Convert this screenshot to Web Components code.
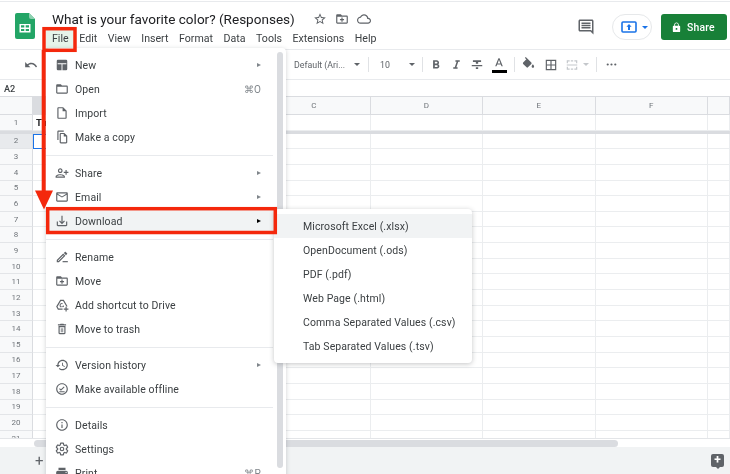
<!DOCTYPE html>
<html>
<head>
<meta charset="utf-8">
<title>What is your favorite color? (Responses)</title>
<style>
  html, body { margin: 0; padding: 0; background: #fff; }
  body { width: 730px; height: 474px; overflow: hidden; position: relative; font-family: Roboto, "Liberation Sans", sans-serif; filter: blur(0.4px); }
</style>
</head>
<body>
<sheet-header></sheet-header>
<sheet-toolbar></sheet-toolbar>
<formula-bar></formula-bar>
<sheet-grid></sheet-grid>
<sheet-footer></sheet-footer>

<file-menu>
  <menu-row icon="new" arrow>New</menu-row>
  <menu-row icon="open" shortcut="⌘O">Open</menu-row>
  <menu-row icon="file">Import</menu-row>
  <menu-row icon="copy">Make a copy</menu-row>
  <menu-sep></menu-sep>
  <menu-row icon="share" arrow>Share</menu-row>
  <menu-row icon="mail" arrow>Email</menu-row>
  <menu-row icon="download" arrow active>Download</menu-row>
  <menu-sep></menu-sep>
  <menu-row icon="rename">Rename</menu-row>
  <menu-row icon="move">Move</menu-row>
  <menu-row icon="shortcut">Add shortcut to Drive</menu-row>
  <menu-row icon="trash">Move to trash</menu-row>
  <menu-sep></menu-sep>
  <menu-row icon="history" arrow>Version history</menu-row>
  <menu-row icon="offline">Make available offline</menu-row>
  <menu-sep></menu-sep>
  <menu-row icon="info">Details</menu-row>
  <menu-row icon="settings">Settings</menu-row>
  <menu-row icon="print" shortcut="⌘P">Print</menu-row>
</file-menu>

<export-menu>
  <export-row active>Microsoft Excel (.xlsx)</export-row>
  <export-row>OpenDocument (.ods)</export-row>
  <export-row>PDF (.pdf)</export-row>
  <export-row>Web Page (.html)</export-row>
  <export-row>Comma Separated Values (.csv)</export-row>
  <export-row>Tab Separated Values (.tsv)</export-row>
</export-menu>

<red-callouts></red-callouts>

<script>
const ICONS = {
  star: '<path d="M22 9.24l-7.19-.62L12 2 9.19 8.63 2 9.24l5.46 4.73L5.82 21 12 17.27 18.18 21l-1.63-7.03L22 9.24zM12 15.4l-3.76 2.27 1-4.28-3.32-2.88 4.38-.38L12 6.1l1.71 4.04 4.38.38-3.32 2.88 1 4.28L12 15.4z"/>',
  move: '<path d="M20 6h-8l-2-2H4c-1.1 0-1.99.9-1.99 2L2 18c0 1.1.9 2 2 2h16c1.1 0 2-.9 2-2V8c0-1.1-.9-2-2-2zm0 12H4V8h16v10z"/><path d="M11 9.5h2V12h2.5v2H13v2.5h-2V14H8.5v-2H11z"/>',
  cloud: '<path d="M19.35 10.04C18.67 6.59 15.64 4 12 4 9.11 4 6.6 5.64 5.35 8.04 2.34 8.36 0 10.91 0 14c0 3.31 2.69 6 6 6h13c2.76 0 5-2.24 5-5 0-2.64-2.05-4.78-4.65-4.96zM19 18H6c-2.21 0-4-1.79-4-4s1.79-4 4-4h.71C7.37 7.69 9.48 6 12 6c3.04 0 5.5 2.46 5.5 5.5v.5H19c1.66 0 3 1.34 3 3s-1.34 3-3 3z"/>',
  comment: '<path d="M21.99 4c0-1.1-.89-2-1.99-2H4c-1.1 0-2 .9-2 2v12c0 1.1.9 2 2 2h14l4 4-.01-18zM20 4v13.17L18.83 16H4V4h16zM6 12h12v2H6zm0-3h12v2H6zm0-3h12v2H6z"/>',
  lock: '<path d="M18 8h-1V6c0-2.76-2.24-5-5-5S7 3.24 7 6v2H6c-1.1 0-2 .9-2 2v10c0 1.1.9 2 2 2h12c1.1 0 2-.9 2-2V10c0-1.1-.9-2-2-2zm-6 9c-1.1 0-2-.9-2-2s.9-2 2-2 2 .9 2 2-.9 2-2 2zm3.1-9H8.9V6c0-1.71 1.39-3.1 3.1-3.1 1.71 0 3.1 1.39 3.1 3.1v2z"/>',
  undo: '<path d="M12.5 8c-2.65 0-5.05.99-6.9 2.6L2 7v9h9l-3.62-3.62c1.39-1.16 3.16-1.88 5.12-1.88 3.54 0 6.55 2.31 7.6 5.5l2.37-.78C21.08 11.03 17.15 8 12.5 8z"/>',
  bold: '<path d="M15.6 10.79c.97-.67 1.65-1.77 1.65-2.79 0-2.26-1.75-4-4-4H7v14h7.04c2.09 0 3.71-1.7 3.71-3.79 0-1.52-.86-2.82-2.15-3.42zM10 6.5h3c.83 0 1.5.67 1.5 1.5s-.67 1.5-1.5 1.5h-3v-3zm3.5 9H10v-3h3.5c.83 0 1.5.67 1.5 1.5s-.67 1.5-1.5 1.5z"/>',
  italic: '<path d="M10 4v3h2.21l-3.42 10H6v3h8v-3h-2.21l3.42-10H18V4z"/>',
  strike: '<path d="M10 19h4v-3h-4v3zM5 4v3h5v3h4V7h5V4H5zM3 14h18v-2H3v2z"/>',
  textcolor: '<path d="M11 2L5.5 16h2.25l1.12-3h6.25l1.12 3h2.25L13 2h-2zm-1.38 9L12 4.67 14.38 11H9.62z"/>',
  fill: '<path d="M16.56 8.94L7.62 0 6.21 1.41l2.38 2.38-5.15 5.15c-.59.59-.59 1.54 0 2.12l5.5 5.5c.29.29.68.44 1.06.44s.77-.15 1.06-.44l5.5-5.5c.59-.58.59-1.53 0-2.12zM19 11.5s-2 2.17-2 3.5c0 1.1.9 2 2 2s2-.9 2-2c0-1.33-2-3.5-2-3.5z"/>',
  borders: '<path d="M3 3v18h18V3H3zm8 16H5v-6h6v6zm0-8H5V5h6v6zm8 8h-6v-6h6v6zm0-8h-6V5h6v6z"/>',
  merge: '<path d="M3 4h5v2H5v3H3zM10 4h4v2h-4zM16 4h5v5h-2V6h-3zM3 11h18v2H3zM3 15h2v3h3v2H3zM10 18h4v2h-4zM19 15h2v5h-5v-2h3z"/>',
  more: '<circle cx="5" cy="12" r="2"/><circle cx="12" cy="12" r="2"/><circle cx="19" cy="12" r="2"/>',
  new: '<path d="M5 3h14a2 2 0 0 1 2 2v14a2 2 0 0 1-2 2H5a2 2 0 0 1-2-2V5a2 2 0 0 1 2-2zm-.5 6v1.6h6.7V21h1.6V10.6h6.7V9z" fill-rule="evenodd"/>',
  open: '<path d="M20 6h-8l-2-2H4c-1.1 0-1.99.9-1.99 2L2 18c0 1.1.9 2 2 2h16c1.1 0 2-.9 2-2V8c0-1.1-.9-2-2-2zm0 12H4V8h16v10z"/>',
  file: '<path d="M14 2H6c-1.1 0-1.99.9-1.99 2L4 20c0 1.1.89 2 1.99 2H18c1.1 0 2-.9 2-2V8l-6-6zm4 18H6V4h7v5h5v11z"/>',
  copy: '<path d="M15 1H6c-1.1 0-2 .9-2 2v14h2V3h9V1zm1 4H10c-1.1 0-2 .9-2 2v14c0 1.1.9 2 2 2h9c1.1 0 2-.9 2-2V10l-5-5zm3 16h-9V7h5v4h4v10z"/>',
  share: '<path d="M15 12c2.21 0 4-1.79 4-4s-1.79-4-4-4-4 1.79-4 4 1.79 4 4 4zm0-6c1.1 0 2 .9 2 2s-.9 2-2 2-2-.9-2-2 .9-2 2-2zm0 8c-2.67 0-8 1.34-8 4v2h16v-2c0-2.66-5.33-4-8-4zm-6 4c.22-.72 3.31-2 6-2 2.7 0 5.8 1.29 6 2H9zm-3-3v-3h3v-2H6V7H4v3H1v2h3v3h2z" transform="matrix(-1 0 0 1 24 0)"/>',
  mail: '<path d="M22 6c0-1.1-.9-2-2-2H4c-1.1 0-2 .9-2 2v12c0 1.1.9 2 2 2h16c1.1 0 2-.9 2-2V6zm-2 0l-8 5-8-5h16zm0 12H4V8l8 5 8-5v10z"/>',
  download: '<path d="M19 13v6H5v-6H3v6c0 1.1.9 2 2 2h14c1.1 0 2-.9 2-2v-6h-2zm-6 .67l2.59-2.58L17 12.5l-5 5-5-5 1.41-1.41L11 13.67V3h2z"/>',
  rename: '<path d="M14.06 9.02l.92.92L5.92 19H5v-.92l9.06-9.06M17.66 3c-.25 0-.51.1-.7.29l-1.83 1.83 3.75 3.75 1.83-1.83c.39-.39.39-1.02 0-1.41l-2.34-2.34c-.2-.2-.45-.29-.71-.29zm-3.6 3.19L3 17.25V21h3.75L17.81 9.94l-3.75-3.75z"/><path d="M13 19h9v2h-9z"/>',
  shortcut: '<path d="M9 3h6l6.5 11-1.7 1.2L13.9 5H10.1L4.3 15l1.9 3.2H13V20H5l-3-5.3z"/><path d="M9.5 9.2a4 4 0 0 1 4-.2l-1 1.6a2 2 0 1 0 1.2 2.2l-1.7.6 2.6-1 1 3.2-7 .2a5 5 0 0 1 1-6.6z" opacity=".9"/><path d="M18 15h2v3h3v2h-3v3h-2v-3h-3v-2h3z"/>',
  trash: '<path d="M6 19c0 1.1.9 2 2 2h8c1.1 0 2-.9 2-2V7H6v12zM8 9h8v10H8V9zm7.5-5l-1-1h-5l-1 1H5v2h14V4z"/><path d="M10 10.5h1.3v7H10zM12.7 10.5H14v7h-1.3z"/>',
  history: '<path d="M13 3c-4.97 0-9 4.03-9 9H1l3.89 3.89.07.14L9 12H6c0-3.87 3.13-7 7-7s7 3.13 7 7-3.13 7-7 7c-1.93 0-3.68-.79-4.94-2.06l-1.42 1.42C8.27 19.99 10.51 21 13 21c4.97 0 9-4.03 9-9s-4.03-9-9-9zm-1 5v5l4.28 2.54.72-1.21-3.5-2.08V8H12z"/>',
  offline: '<path d="M12 2C6.48 2 2 6.48 2 12s4.48 10 10 10 10-4.48 10-10S17.52 2 12 2zm0 18c-4.41 0-8-3.59-8-8s3.59-8 8-8 8 3.59 8 8-3.59 8-8 8z"/><path d="M8.2 10.6l2 2 5-5 1.2 1.2-6.2 6.4-3.2-3.4zM7.5 16h9v1.6h-9z"/>',
  info: '<path d="M11 7h2v2h-2zm0 4h2v6h-2zm1-9C6.48 2 2 6.48 2 12s4.48 10 10 10 10-4.48 10-10S17.52 2 12 2zm0 18c-4.41 0-8-3.59-8-8s3.59-8 8-8 8 3.59 8 8-3.59 8-8 8z"/>',
  settings: '<path fill="none" stroke="currentColor" stroke-width="2" d="M19.43 12.98c.04-.32.07-.64.07-.98s-.03-.66-.07-.98l2.11-1.65c.19-.15.24-.42.12-.64l-2-3.46c-.12-.22-.39-.3-.61-.22l-2.49 1c-.52-.4-1.08-.73-1.69-.98l-.38-2.65C14.46 2.18 14.25 2 14 2h-4c-.25 0-.46.18-.49.42l-.38 2.65c-.61.25-1.17.59-1.69.98l-2.49-1c-.23-.09-.49 0-.61.22l-2 3.46c-.13.22-.07.49.12.64l2.11 1.65c-.04.32-.07.65-.07.98s.03.66.07.98l-2.11 1.65c-.19.15-.24.42-.12.64l2 3.46c.12.22.39.3.61.22l2.49-1c.52.4 1.08.73 1.69.98l.38 2.65c.03.24.24.42.49.42h4c.25 0 .46-.18.49-.42l.38-2.65c.61-.25 1.17-.59 1.69-.98l2.49 1c.23.09.49 0 .61-.22l2-3.46c.12-.22.07-.49-.12-.64l-2.11-1.65z"/><circle cx="12" cy="12" r="3" fill="none" stroke="currentColor" stroke-width="2"/>',
  print: '<path d="M19 8H5c-1.66 0-3 1.34-3 3v6h4v4h12v-4h4v-6c0-1.66-1.34-3-3-3zm-3 11H8v-5h8v5zm3-7c-.55 0-1-.45-1-1s.45-1 1-1 1 .45 1 1-.45 1-1 1zm-1-9H6v4h12V3z"/>'
};

class SheetIcon extends HTMLElement {
  constructor() {
    super();
    this.attachShadow({ mode: 'open' });
  }
  connectedCallback() {
    const size = this.getAttribute('size') || 15;
    const name = this.getAttribute('name');
    this.shadowRoot.innerHTML = `
      <style>
        :host { display: inline-flex; width: ${size}px; height: ${size}px; flex: none; }
        svg { width: 100%; height: 100%; fill: currentColor; display: block; }
      </style>
      <svg viewBox="0 0 24 24">${ICONS[name] || ''}</svg>
    `;
  }
}

class SheetHeader extends HTMLElement {
  constructor() {
    super();
    this.attachShadow({ mode: 'open' });
  }
  connectedCallback() {
    const menus = ['File', 'Edit', 'View', 'Insert', 'Format', 'Data', 'Tools', 'Extensions', 'Help'];
    this.shadowRoot.innerHTML = `
      <style>
        :host {
          display: flex;
          box-sizing: border-box;
          height: 50px;
          border-top: 1px solid #fff;
          box-shadow: inset 0 1px 0 #e8eaed;
          border-bottom: 1px solid #e8eaed;
          padding: 12px 3px 0 15px;
          align-items: flex-start;
          color: #3c4043;
        }
        .logo { width: 20px; height: 26px; flex: none; }
        .doc { margin-left: 17px; margin-top: -2px; flex: 1; }
        .title-row { display: flex; align-items: center; height: 16px; }
        .title { font-size: 13.55px; color: #202124; white-space: nowrap; }
        .doc-icons { display: flex; gap: 8px; margin-left: 18px; color: #5f6368; }
        .menus { display: flex; gap: 10.6px; font-size: 10.6px; margin-top: 5px; line-height: 13px; }
        .menus span:first-child { background: #e6f4ea; margin: -2px -6px -5px; padding: 2px 6px 5px; }
        .actions { display: flex; align-items: center; height: 26px; margin-top: 1px; }
        .comment { color: #5f6368; margin-right: 17px; display: flex; }
        .present {
          box-sizing: border-box; width: 40px; height: 26px; border: 1px solid #e6e8ea; border-radius: 13px;
          display: flex; align-items: center; padding-left: 8px; gap: 5px; margin-right: 9px;
        }
        .present svg { width: 16px; height: 12px; flex: none; }
        .present b { border-left: 3px solid transparent; border-right: 3px solid transparent; border-top: 3px solid #1a73e8; }
        .share {
          box-sizing: border-box; width: 66px; height: 26px; background: #188038; color: #fff; border-radius: 3px;
          display: flex; align-items: center; padding-left: 10px; gap: 5px; font-size: 10.4px; font-weight: 500; letter-spacing: .2px;
        }
      </style>
      <svg class="logo" viewBox="0 0 20 26">
        <path d="M2 0h12l6 6v18a2 2 0 0 1-2 2H2a2 2 0 0 1-2-2V2a2 2 0 0 1 2-2z" fill="#23a566"/>
        <path d="M14 0l6 6h-4a2 2 0 0 1-2-2z" fill="#8ed1b1"/>
        <path d="M4.5 11h11v8.5h-11zM6 12.3v2.2h3.3v-2.2zm4.7 0v2.2H14v-2.2zM6 15.9v2.2h3.3v-2.2zm4.7 0v2.2H14v-2.2z" fill="#fff" fill-rule="evenodd"/>
      </svg>
      <div class="doc">
        <div class="title-row">
          <span class="title">What is your favorite color? (Responses)</span>
          <span class="doc-icons">
            <sheet-icon name="star" size="14"></sheet-icon>
            <sheet-icon name="move" size="14"></sheet-icon>
            <sheet-icon name="cloud" size="14"></sheet-icon>
          </span>
        </div>
        <div class="menus">${menus.map((m) => `<span>${m}</span>`).join('')}</div>
      </div>
      <div class="actions">
        <span class="comment"><sheet-icon name="comment" size="18"></sheet-icon></span>
        <span class="present">
          <svg viewBox="0 0 16 12">
            <rect x="1" y="1" width="14" height="10" rx="1" fill="none" stroke="#1a73e8" stroke-width="1.6"/>
            <path d="M8 3l2.6 2.8H9V9H7V5.8H5.4z" fill="#1a73e8"/>
          </svg>
          <b></b>
        </span>
        <span class="share"><sheet-icon name="lock" size="11"></sheet-icon>Share</span>
      </div>
    `;
  }
}

class SheetToolbar extends HTMLElement {
  constructor() {
    super();
    this.attachShadow({ mode: 'open' });
  }
  connectedCallback() {
    this.shadowRoot.innerHTML = `
      <style>
        :host {
          display: flex; box-sizing: border-box; height: 30px; align-items: center;
          border-bottom: 1px solid #e8eaed; color: #5f6368; font-size: 8.8px; padding-left: 24px;
        }
        .undo { width: 14px; margin-right: 256px; display: flex; }
        .font { width: 54px; color: #5f6368; white-space: nowrap; }
        .caret { width: 0; height: 0; border-left: 3px solid transparent; border-right: 3px solid transparent; border-top: 3px solid #5f6368; }
        .sep { width: 1px; height: 15px; background: #e0e2e5; }
        .size { width: 26px; }
        .tools { display: flex; align-items: center; }
        .tools sheet-icon { margin-right: 7px; }
        .a { display: flex; flex-direction: column; align-items: center; width: 16px; margin-right: 7px; }
        .a i { width: 15px; height: 3px; background: #000; margin-top: -1px; }
        .muted { color: #c4c7cb; }
      </style>
      <span class="undo"><sheet-icon name="undo" size="14"></sheet-icon></span>
      <span class="font">Default (Ari...</span>
      <span class="caret" style="margin:0 8px 0 6px"></span>
      <span class="sep"></span>
      <span style="width:11px"></span>
      <span class="size">10</span>
      <span class="caret" style="margin-left:3px;margin-right:7px"></span>
      <span class="sep" style="margin-right:6px"></span>
      <span class="tools">
        <sheet-icon name="bold" size="14"></sheet-icon>
        <sheet-icon name="italic" size="13"></sheet-icon>
        <sheet-icon name="strike" size="14"></sheet-icon>
        <span class="a"><sheet-icon name="textcolor" size="14" style="margin:0"></sheet-icon><i></i></span>
      </span>
      <span class="sep" style="margin-right:6px"></span>
      <span class="tools">
        <sheet-icon name="fill" size="15" style="margin-right:8px"></sheet-icon>
        <sheet-icon name="borders" size="14" style="margin-right:7px"></sheet-icon>
        <sheet-icon class="muted" name="merge" size="14" style="margin-right:4px"></sheet-icon>
      </span>
      <span class="caret" style="border-top-color:#c4c7cb;margin-right:7px"></span>
      <span class="sep" style="margin-right:8px"></span>
      <sheet-icon name="more" size="13"></sheet-icon>
    `;
  }
}

class FormulaBar extends HTMLElement {
  constructor() {
    super();
    this.attachShadow({ mode: 'open' });
  }
  connectedCallback() {
    this.shadowRoot.innerHTML = `
      <style>
        :host {
          display: flex; box-sizing: border-box; height: 17px; align-items: center;
          padding-left: 4px; font-size: 9.2px; color: #3c4043; font-weight: 500; border-bottom: 1px solid #dadce0;
        }
      </style>
      <slot>A2</slot>
    `;
  }
}

class SheetGrid extends HTMLElement {
  constructor() {
    super();
    this.attachShadow({ mode: 'open' });
  }
  connectedCallback() {
    const cols = ['', '', 'C', 'D', 'E', 'F', ''];
    const rows = [];
    for (let r = 2; r <= 21; r++) {
      const cells = cols.map((c, i) => {
        const sel = r === 2 && i === 0 ? ' sel' : '';
        return `<div class="cell${sel}"></div>`;
      }).join('');
      rows.push(`<div class="num${r === 2 ? ' on' : ''}">${r}</div>${cells}`);
    }
    this.shadowRoot.innerHTML = `
      <style>
        :host { display: block; height: 341px; overflow: hidden; font-size: 8px; color: #70757a; }
        .grid { display: grid; grid-template-columns: 33px repeat(6, 112.5px) 22px; }
        .head {
          background: #f8f9fa; height: 18px; display: flex; align-items: center; justify-content: center;
          border-right: 1px solid #dadce0; border-bottom: 1px solid #dadce0; box-sizing: border-box;
        }
        .head.on { background: #dadce0; }
        .num {
          background: #f8f9fa; height: 15.65px; box-sizing: border-box; display: flex; align-items: center; justify-content: center;
          border-right: 1px solid #dadce0; border-bottom: 1px solid #e3e5e8;
        }
        .num.on { background: #e8eaed; }
        .cell { height: 15.65px; box-sizing: border-box; border-right: 1px solid #ebedef; border-bottom: 1px solid #ebedef; }
        .cell.sel { border: 1.5px solid #1a73e8; }
        .title { font-size: 9.5px; font-weight: 700; color: #202124; padding-left: 3px; display: flex; align-items: center; overflow: hidden; }
        .frozen { grid-column: 1 / -1; height: 3px; background: #dadce0; }
      </style>
      <div class="grid">
        <div class="head"></div>
        ${cols.map((c, i) => `<div class="head${i === 0 ? ' on' : ''}">${c}</div>`).join('')}
        <div class="num">1</div>
        <div class="cell title">Timestamp</div>
        ${cols.slice(1).map(() => '<div class="cell"></div>').join('')}
        <div class="frozen"></div>
        ${rows.join('')}
      </div>
    `;
  }
}

class SheetFooter extends HTMLElement {
  constructor() {
    super();
    this.attachShadow({ mode: 'open' });
  }
  connectedCallback() {
    this.shadowRoot.innerHTML = `
      <style>
        :host { display: block; height: 36px; border-top: 1px solid #e3e5e8; box-sizing: border-box; }
        .track { height: 8px; padding: 1px 0 0 34px; box-sizing: border-box; }
        .thumb { width: 584px; height: 7px; background: #dadce0; border-radius: 4px; }
        .bar { height: 27px; background: #f1f3f4; display: flex; align-items: center; justify-content: space-between; padding: 0 6px 0 35px; box-sizing: border-box; }
        .plus { font: 400 15px Roboto, sans-serif; color: #5f6368; }
        .explore {
          position: relative; width: 13px; height: 13px; background: #5f6368; border-radius: 2px; display: flex; align-items: center; justify-content: center;
          color: #fff; font: 700 12px/13px Roboto, sans-serif;
        }
        .explore::after {
          content: ""; position: absolute; left: 4.5px; top: 13px;
          border-left: 2px solid transparent; border-right: 2px solid transparent; border-top: 2px solid #5f6368;
        }
      </style>
      <div class="track"><div class="thumb"></div></div>
      <div class="bar"><span class="plus">+</span><span class="explore">+</span></div>
    `;
  }
}

class FileMenu extends HTMLElement {
  constructor() {
    super();
    this.attachShadow({ mode: 'open' });
  }
  connectedCallback() {
    this.shadowRoot.innerHTML = `
      <style>
        :host {
          position: absolute; left: 46px; top: 48px; width: 240px; height: 440px; box-sizing: border-box;
          background: #fff; padding: 5px 13px 0 0; border-radius: 4px;
          box-shadow: 0 1px 4px rgba(60, 64, 67, .25);
          display: block;
        }
        .thumb { position: absolute; right: 3px; top: 4px; width: 6px; height: 416px; background: #dadce0; border-radius: 3px; }
      </style>
      <slot></slot>
      <div class="thumb"></div>
    `;
  }
}

class MenuRow extends HTMLElement {
  constructor() {
    super();
    this.attachShadow({ mode: 'open' });
  }
  connectedCallback() {
    const icon = this.getAttribute('icon');
    const shortcut = this.getAttribute('shortcut');
    const active = this.hasAttribute('active');
    this.shadowRoot.innerHTML = `
      <style>
        :host {
          display: flex; align-items: center; height: 24px; box-sizing: border-box;
          padding: 0 12px 0 9px; font-size: 10.5px; color: #3c4043; letter-spacing: .1px;
          background: ${active ? '#f1f3f4' : 'transparent'};
          margin-right: ${active ? '-3px' : '0'};
        }
        .icon { width: 20px; display: flex; color: #5f6368; }
        .label { flex: 1; white-space: nowrap; }
        .arrow { border-left: 4px solid ${active ? '#000' : '#80868b'}; border-top: 2.5px solid transparent; border-bottom: 2.5px solid transparent; margin-right: ${active ? '3px' : '0'}; }
        .key { color: #80868b; font-size: 10px; }
      </style>
      <span class="icon"><sheet-icon name="${icon}" size="14"></sheet-icon></span>
      <span class="label"><slot></slot></span>
      ${shortcut ? `<span class="key">${shortcut}</span>` : ''}
      ${this.hasAttribute('arrow') ? '<span class="arrow"></span>' : ''}
    `;
  }
}

class MenuSep extends HTMLElement {
  constructor() {
    super();
    this.attachShadow({ mode: 'open' });
  }
  connectedCallback() {
    this.shadowRoot.innerHTML = `
      <style>
        :host { display: block; height: 12px; padding-top: 5.5px; box-sizing: border-box; }
        div { height: 1px; background: #e8eaed; }
      </style>
      <div></div>
    `;
  }
}

class ExportMenu extends HTMLElement {
  constructor() {
    super();
    this.attachShadow({ mode: 'open' });
  }
  connectedCallback() {
    this.shadowRoot.innerHTML = `
      <style>
        :host {
          position: absolute; left: 274px; top: 209px; width: 198px; box-sizing: border-box;
          background: #fff; padding: 5px 0; border-radius: 4px;
          box-shadow: 0 1px 5px rgba(60, 64, 67, .3);
          display: block;
        }
      </style>
      <slot></slot>
    `;
  }
}

class ExportRow extends HTMLElement {
  constructor() {
    super();
    this.attachShadow({ mode: 'open' });
  }
  connectedCallback() {
    this.shadowRoot.innerHTML = `
      <style>
        :host {
          display: flex; align-items: center; height: 24px; padding-left: 29px;
          font-size: 10.5px; color: #3c4043; letter-spacing: .1px; white-space: nowrap;
          background: ${this.hasAttribute('active') ? '#f1f3f4' : 'transparent'};
        }
      </style>
      <slot></slot>
    `;
  }
}

class RedCallouts extends HTMLElement {
  constructor() {
    super();
    this.attachShadow({ mode: 'open' });
  }
  connectedCallback() {
    this.shadowRoot.innerHTML = `
      <style>
        :host { position: absolute; inset: 0; display: block; pointer-events: none; }
        svg { position: absolute; left: 0; top: 0; }
      </style>
      <svg width="730" height="474" fill="none" stroke="#f4280c" stroke-width="3.5">
        <rect x="44" y="28.7" width="31" height="21.6"/>
        <path d="M43.7 50V192" stroke-width="4"/>
        <path d="M35 190.5h18l-9 19z" fill="#f4280c" stroke="none"/>
        <rect x="47.7" y="208.7" width="227.6" height="23.8"/>
      </svg>
    `;
  }
}

customElements.define('sheet-icon', SheetIcon);
customElements.define('sheet-header', SheetHeader);
customElements.define('sheet-toolbar', SheetToolbar);
customElements.define('formula-bar', FormulaBar);
customElements.define('sheet-grid', SheetGrid);
customElements.define('sheet-footer', SheetFooter);
customElements.define('file-menu', FileMenu);
customElements.define('menu-row', MenuRow);
customElements.define('menu-sep', MenuSep);
customElements.define('export-menu', ExportMenu);
customElements.define('export-row', ExportRow);
customElements.define('red-callouts', RedCallouts);
</script>
</body>
</html>
